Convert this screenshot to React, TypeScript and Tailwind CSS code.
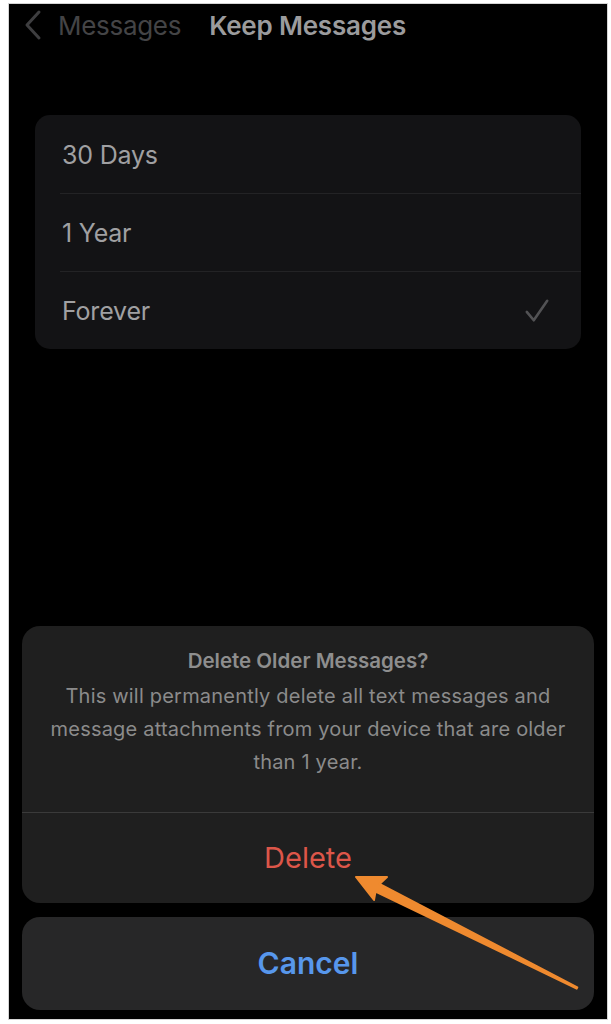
const font = { fontFamily: "Inter, 'Noto Sans', sans-serif" }

const OPTIONS = ["30 Days", "1 Year", "Forever"]

const BackChevron = () => (
  <svg width="20" height="32" viewBox="0 0 20 32" fill="none" className="shrink-0">
    <path d="M16 3 L4 16 L16 29" stroke="#3e3e40" strokeWidth="3" strokeLinecap="round" strokeLinejoin="round" />
  </svg>
)

const Tick = () => (
  <svg width="26" height="26" viewBox="0 0 28 28" fill="none" className="shrink-0">
    <path d="M3 15 L10.5 24 L25 3" stroke="#525254" strokeWidth="2.8" strokeLinecap="round" strokeLinejoin="round" />
  </svg>
)

const NavBar = () => (
  <div className="flex items-center h-[42px] pl-[14px]">
    <BackChevron />
    <span className="ml-[15px] text-[26px] tracking-[-0.3px] text-[#444446]">Messages</span>
    <span className="ml-[28px] text-[26px] font-semibold tracking-[-0.2px] text-[#9b9b9d]">Keep Messages</span>
  </div>
)

const OptionList = ({ selected }: { selected: string }) => (
  <div className="mx-[26px] mt-[69px] rounded-[15px] bg-[#131315] overflow-hidden">
    {OPTIONS.map((label, i) => (
      <div key={label} className="flex">
        <div
          className={
            "flex items-center flex-1 h-[78px] ml-[25px] pl-[2px] pr-[31px] " +
            (i > 0 ? "border-t border-[#232325]" : "")
          }
        >
          <span className="flex-1 pt-[3px] text-[25px] tracking-[-0.2px] text-[#a0a0a2]">{label}</span>
          {label === selected && <Tick />}
        </div>
      </div>
    ))}
  </div>
)

const ActionSheet = () => (
  <div className="flex flex-col gap-[14px] mx-[13px] mb-[9px]">
    <div className="rounded-[18px] bg-[#1f1f1f] overflow-hidden">
      <div className="flex flex-col items-center pt-[24px] pb-[33px] px-2 text-center">
        <p className="text-[20.5px] leading-[22px] font-semibold text-[#8e8e8e]">Delete Older Messages?</p>
        <p className="mt-2 text-[20px] leading-[33px] tracking-[0.2px] text-[#8b8b8b] whitespace-nowrap">
          This will permanently delete all text messages and
          <br />
          message attachments from your device that are older
          <br />
          than 1 year.
        </p>
      </div>
      <div className="flex items-center justify-center h-[91px] border-t border-[#3a3a3a]">
        <span className="text-[29px] text-[#dc5649]">Delete</span>
      </div>
    </div>
    <div className="flex items-center justify-center h-[93px] rounded-[18px] bg-[#272728]">
      <span className="text-[30px] font-semibold text-[#5797ec]">Cancel</span>
    </div>
  </div>
)

// orange callout pointing at the delete button
const Arrow = () => (
  <svg className="absolute inset-0 pointer-events-none" width="611" height="1024" viewBox="0 0 611 1024">
    <polygon
      points="356,877 387,877 379.5,884 577.3,987.4 576.7,988.6 375.5,891.5 374,900"
      fill="#ef8a2f"
      stroke="#ef8a2f"
      strokeWidth="2"
      strokeLinejoin="round"
    />
  </svg>
)

export default function App() {
  return (
    <div className="relative w-[611px] h-[1024px] bg-white pl-[8px] pt-[3px]" style={font}>
      <div className="flex flex-col w-[600px] h-[1017px] bg-black border border-[#d4d4d4]">
        <NavBar />
        <OptionList selected="Forever" />
        <div className="flex-1" />
        <ActionSheet />
      </div>
      <Arrow />
    </div>
  )
}
